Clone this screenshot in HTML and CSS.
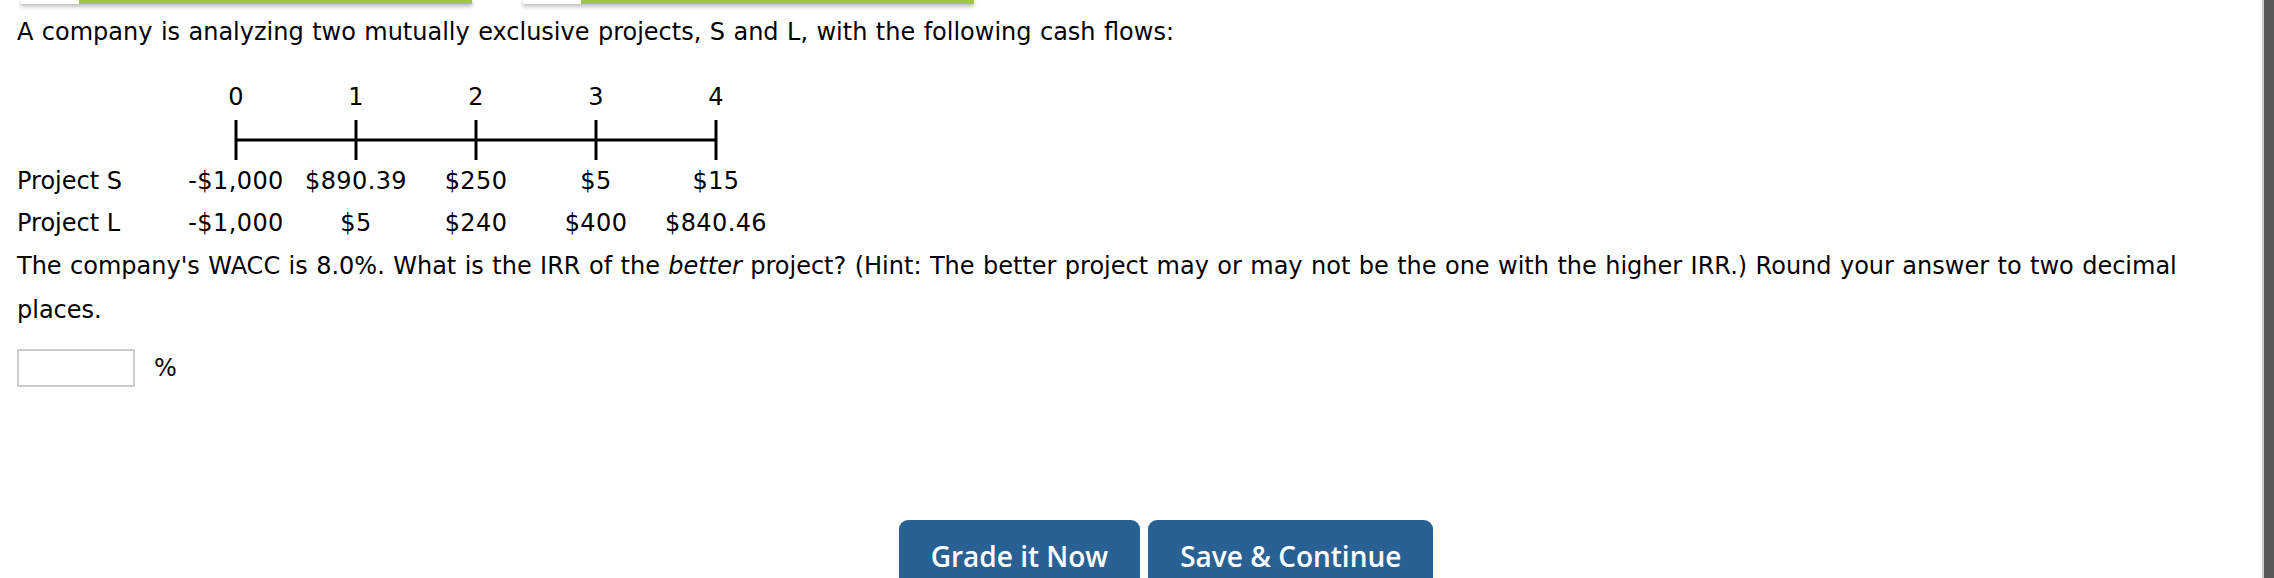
FILE: index.html
```html
<!DOCTYPE html>
<html lang="en">
<head>
<meta charset="utf-8">
<title>IRR question</title>
<link rel="stylesheet" href="styles.css">
</head>
<body>
<div class="page">
  <main class="main">
    <div class="tabs">
      <div class="tab"><span class="tab-icon"></span><span class="tab-bar"></span></div>
      <div class="tab"><span class="tab-icon"></span><span class="tab-bar"></span></div>
    </div>
    <div class="question">
      <p class="intro">A company is analyzing two mutually exclusive projects, S and L, with the following cash flows:</p>
      <div class="cf">
        <div class="cf-row cf-years">
          <span class="cf-label"></span>
          <span class="cf-cell">0</span>
          <span class="cf-cell">1</span>
          <span class="cf-cell">2</span>
          <span class="cf-cell">3</span>
          <span class="cf-cell">4</span>
        </div>
        <div class="cf-row cf-line">
          <span class="cf-label"></span>
          <svg class="timeline" width="600" height="40" viewBox="0 0 600 40" aria-hidden="true">
            <line x1="60" y1="20" x2="540" y2="20" stroke="#000" stroke-width="3"/>
            <line x1="60" y1="0" x2="60" y2="40" stroke="#000" stroke-width="3"/>
            <line x1="180" y1="0" x2="180" y2="40" stroke="#000" stroke-width="3"/>
            <line x1="300" y1="0" x2="300" y2="40" stroke="#000" stroke-width="3"/>
            <line x1="420" y1="0" x2="420" y2="40" stroke="#000" stroke-width="3"/>
            <line x1="540" y1="0" x2="540" y2="40" stroke="#000" stroke-width="3"/>
          </svg>
        </div>
        <div class="cf-row cf-values">
          <span class="cf-label">Project S</span>
          <span class="cf-cell">-$1,000</span>
          <span class="cf-cell">$890.39</span>
          <span class="cf-cell">$250</span>
          <span class="cf-cell">$5</span>
          <span class="cf-cell">$15</span>
        </div>
        <div class="cf-row cf-values">
          <span class="cf-label">Project L</span>
          <span class="cf-cell">-$1,000</span>
          <span class="cf-cell">$5</span>
          <span class="cf-cell">$240</span>
          <span class="cf-cell">$400</span>
          <span class="cf-cell">$840.46</span>
        </div>
      </div>
      <p class="prompt">The company's WACC is 8.0%. What is the IRR of the <em>better</em> project? (Hint: The better project may or may not be the one with the higher IRR.) Round your answer to two decimal places.</p>
      <div class="answer">
        <input class="answer-input" type="text" aria-label="IRR">
        <span class="unit">%</span>
      </div>
    </div>
    <div class="actions">
      <button class="btn" type="button">Grade it Now</button>
      <button class="btn" type="button">Save &amp; Continue</button>
    </div>
  </main>
  <div class="scrollbar"></div>
</div>
</body>
</html>
```

FILE: styles.css
```css
html, body {
  margin: 0;
  padding: 0;
  height: 100%;
  overflow: hidden;
  background: #fff;
}

.page {
  display: flex;
  height: 578px;
  overflow: hidden;
}

.main {
  flex: 1;
  display: flex;
  flex-direction: column;
  min-width: 0;
}

.scrollbar {
  width: 10px;
  flex: 0 0 10px;
  background: #585858;
  border-left: 2px solid #cacaca;
}

/* top cut-off tab buttons */
.tabs {
  display: flex;
  gap: 51px;
  padding-left: 21px;
  height: 4px;
}

.tab {
  display: flex;
  height: 4px;
  box-shadow: 0 2px 4px rgba(0, 0, 0, 0.35);
}

.tab-icon {
  width: 58px;
  background: #fff;
}

.tab-bar {
  width: 393px;
  background: #9ec54c;
}

/* question text */
.question {
  padding: 8px 62px 0 17px;
  font-family: "DejaVu Sans", Verdana, sans-serif;
  font-size: 24px;
  color: #000;
}

.intro {
  margin: 0;
  line-height: 40px;
  word-spacing: 0.8px;
}

.cf {
  margin-top: 30px;
}

.cf-row {
  display: flex;
  align-items: center;
}

.cf-label {
  width: 159px;
  flex: 0 0 159px;
}

.cf-cell {
  width: 120px;
  flex: 0 0 120px;
  text-align: center;
  white-space: nowrap;
  letter-spacing: 0.4px;
}

.cf-years {
  height: 30px;
}

.cf-line {
  margin-top: 8px;
  height: 40px;
}

.timeline {
  display: block;
}

.cf-values {
  height: 42px;
}

.prompt {
  margin: 0;
  line-height: 44px;
  word-spacing: 0.8px;
}

.prompt em {
  font-style: italic;
}

.answer {
  display: flex;
  align-items: center;
  gap: 19px;
  margin-top: 17px;
}

.answer-input {
  width: 114px;
  height: 34px;
  box-sizing: content-box;
  padding: 0;
  margin: 0;
  border: 2px solid #cccccc;
  background: #fff;
  font: inherit;
}

.unit {
  font-size: 24px;
}

/* action buttons */
.actions {
  margin-top: auto;
  display: flex;
  justify-content: center;
  gap: 8px;
  padding-left: 70px;
  height: 58px;
  align-items: flex-start;
}

.btn {
  font-family: "Open Sans", sans-serif;
  font-weight: 600;
  font-size: 28px;
  line-height: 40px;
  color: #fff;
  background: #2a6194;
  border: 0;
  border-radius: 9px;
  padding: 16px 32px;
  margin: 0;
  cursor: pointer;
}
```
